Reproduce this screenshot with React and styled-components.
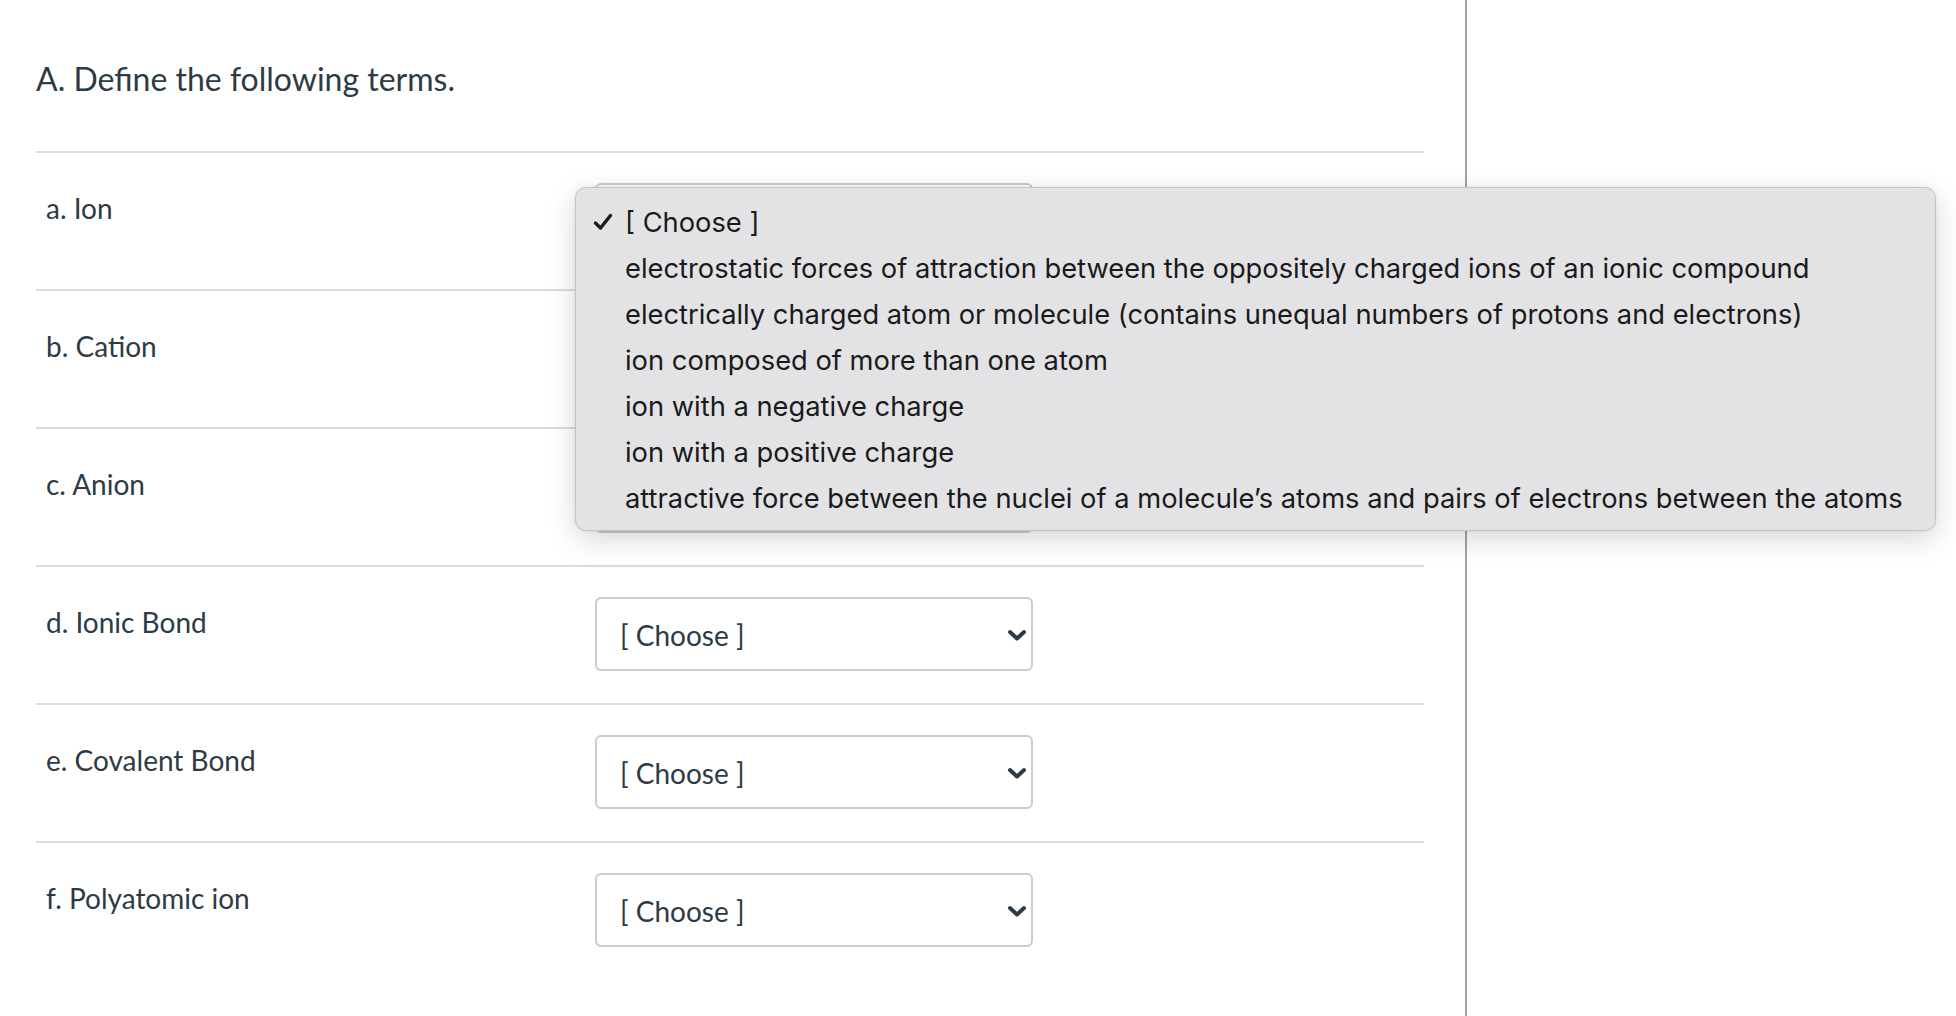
import React from 'react';
import styled, { createGlobalStyle } from 'styled-components';

const terms = [
  'a. Ion',
  'b. Cation',
  'c. Anion',
  'd. Ionic Bond',
  'e. Covalent Bond',
  'f. Polyatomic ion',
];

const options = [
  '[ Choose ]',
  'electrostatic forces of attraction between the oppositely charged ions of an ionic compound',
  'electrically charged atom or molecule (contains unequal numbers of protons and electrons)',
  'ion composed of more than one atom',
  'ion with a negative charge',
  'ion with a positive charge',
  'attractive force between the nuclei of a molecule’s atoms and pairs of electrons between the atoms',
];

// the first select is open, its menu covers the selects of rows a to c
const OPEN_ROW = 0;
const COVERED_ROWS = 3;

const App = () => {
  return (
    <>
      <GlobalStyle />
      <Page>
        <Main>
          <Heading>A. Define the following terms.</Heading>
          <List>
            {terms.map((term, i) => (
              <Row key={term} last={i === terms.length - 1}>
                <Label>{term}</Label>
                <SelectWrap>
                  <Select>
                    <Value covered={i < COVERED_ROWS}>[ Choose ]</Value>
                    <Chevron />
                  </Select>
                  {i === OPEN_ROW && <Menu />}
                </SelectWrap>
              </Row>
            ))}
          </List>
        </Main>
      </Page>
    </>
  );
};

const Chevron = () => (
  <svg width="20" height="12" viewBox="0 0 20 12">
    <polyline
      points="3,3 10,9.5 17,3"
      fill="none"
      stroke="#2d3b45"
      strokeWidth="4"
      strokeLinecap="round"
      strokeLinejoin="round"
    />
  </svg>
);

const Menu = () => (
  <Popup>
    {options.map((opt, i) => (
      <Option key={opt}>
        <Check>
          {i === 0 && (
            <svg width="20" height="18" viewBox="0 0 20 18">
              <polyline
                points="2.5,10 7.5,15 17.5,2.5"
                fill="none"
                stroke="#1d1d1f"
                strokeWidth="3.4"
                strokeLinecap="round"
                strokeLinejoin="round"
              />
            </svg>
          )}
        </Check>
        {opt}
      </Option>
    ))}
  </Popup>
);

export default App;

const GlobalStyle = createGlobalStyle`
  html, body {
    margin: 0;
    padding: 0;
    background: #fff;
  }
  body {
    font-family: Lato, "Liberation Sans", sans-serif;
    color: #2d3b45;
  }
`;

const Page = styled.div`
  display: flex;
  min-height: 1016px;
`;

const Main = styled.div`
  width: 1467px;
  box-sizing: border-box;
  padding: 0 41px 0 36px;
  border-right: 2px solid #a4a4a4;
`;

const Heading = styled.h2`
  margin: 0;
  padding: 60px 0 53px;
  font-size: 32px;
  line-height: 38px;
  font-weight: 400;
`;

const List = styled.div`
  display: flex;
  flex-direction: column;
`;

const Row = styled.div`
  display: grid;
  grid-template-columns: 559px 438px;
  align-items: start;
  border-top: 2px solid #dcdcdc;
  padding: 30px 0 ${(p) => (p.last ? '70px' : '32px')};
`;

const Label = styled.div`
  padding: 5px 0 0 10px;
  font-size: 28px;
  line-height: 40px;
`;

const SelectWrap = styled.div`
  position: relative;
`;

const Select = styled.div`
  box-sizing: border-box;
  height: 74px;
  display: flex;
  align-items: center;
  justify-content: space-between;
  padding: 2px 4px 0 23px;
  border: 2px solid #c7cdd1;
  border-radius: 6px;
  background: #fff;
  font-size: 28px;
  color: #2d3b45;
`;

const Value = styled.span`
  visibility: ${(p) => (p.covered ? 'hidden' : 'visible')};
`;

const Popup = styled.div`
  position: absolute;
  left: -20px;
  top: 4px;
  width: 1361px;
  box-sizing: border-box;
  padding: 11px 0 9px;
  background: #e3e3e5;
  border: 1px solid #c4c4c6;
  border-radius: 11px;
  box-shadow: 0 8px 28px rgba(0, 0, 0, 0.16), 0 0 4px rgba(0, 0, 0, 0.06);
  z-index: 10;
`;

const Option = styled.div`
  display: flex;
  align-items: center;
  height: 46px;
  font-family: Inter, "Liberation Sans", sans-serif;
  font-size: 27.3px;
  color: #1a1a1c;
  white-space: nowrap;
`;

const Check = styled.span`
  width: 49px;
  padding-left: 17px;
  box-sizing: border-box;
  display: flex;
  align-items: center;
`;
